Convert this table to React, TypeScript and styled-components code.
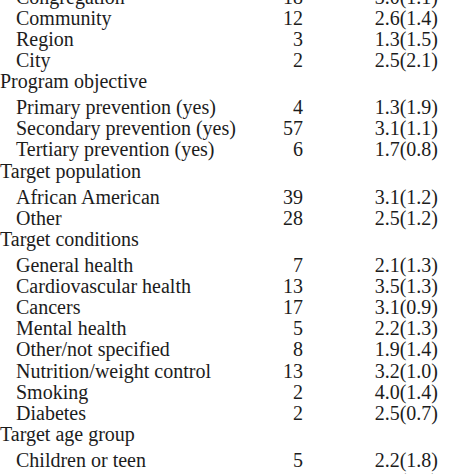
import React from "react";
import styled, { createGlobalStyle } from "styled-components";

const Global = createGlobalStyle`
  html, body { margin: 0; padding: 0; background: #ffffff; }
  body { overflow: hidden; }
`;

const Page = styled.div`
  width: 474px;
  height: 474px;
  overflow: hidden;
  background: #ffffff;
`;

const Table = styled.div`
  display: grid;
  grid-template-columns: 243px 60px 135px;
  margin-top: -13.5px;
  font-family: "Liberation Serif", "Times New Roman", serif;
  font-size: 20px;
  line-height: 21.15px;
  color: #1c1c1c;
`;

const GroupLabel = styled.div`
  grid-column: 1 / -1;
  padding-left: 0;
  padding-bottom: 4.8px;
  white-space: nowrap;
`;

const ItemLabel = styled.div`
  padding-left: 16px;
  white-space: nowrap;
`;

const Num = styled.div`
  text-align: right;
  white-space: nowrap;
`;

type Row = { label: string; n?: string; v?: string; group?: boolean };

const rows: Row[] = [
  { label: "Congregation", n: "18", v: "3.0(1.1)" },
  { label: "Community", n: "12", v: "2.6(1.4)" },
  { label: "Region", n: "3", v: "1.3(1.5)" },
  { label: "City", n: "2", v: "2.5(2.1)" },
  { label: "Program objective", group: true },
  { label: "Primary prevention (yes)", n: "4", v: "1.3(1.9)" },
  { label: "Secondary prevention (yes)", n: "57", v: "3.1(1.1)" },
  { label: "Tertiary prevention (yes)", n: "6", v: "1.7(0.8)" },
  { label: "Target population", group: true },
  { label: "African American", n: "39", v: "3.1(1.2)" },
  { label: "Other", n: "28", v: "2.5(1.2)" },
  { label: "Target conditions", group: true },
  { label: "General health", n: "7", v: "2.1(1.3)" },
  { label: "Cardiovascular health", n: "13", v: "3.5(1.3)" },
  { label: "Cancers", n: "17", v: "3.1(0.9)" },
  { label: "Mental health", n: "5", v: "2.2(1.3)" },
  { label: "Other/not specified", n: "8", v: "1.9(1.4)" },
  { label: "Nutrition/weight control", n: "13", v: "3.2(1.0)" },
  { label: "Smoking", n: "2", v: "4.0(1.4)" },
  { label: "Diabetes", n: "2", v: "2.5(0.7)" },
  { label: "Target age group", group: true },
  { label: "Children or teen", n: "5", v: "2.2(1.8)" },
  { label: "Adult", n: "60", v: "2.9(1.2)" },
];

export default function App() {
  return (
    <Page>
      <Global />
      <Table>
        {rows.map((r, i) =>
          r.group ? (
            <GroupLabel key={i}>{r.label}</GroupLabel>
          ) : (
            <React.Fragment key={i}>
              <ItemLabel>{r.label}</ItemLabel>
              <Num>{r.n}</Num>
              <Num>{r.v}</Num>
            </React.Fragment>
          )
        )}
      </Table>
    </Page>
  );
}
